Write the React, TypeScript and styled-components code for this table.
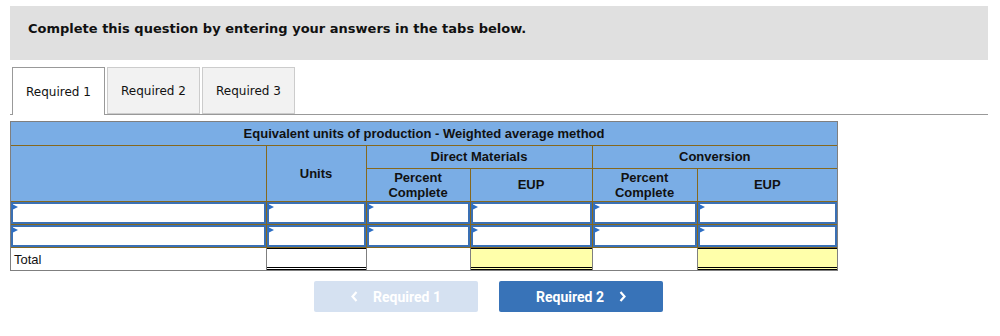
import styled, { createGlobalStyle } from 'styled-components';

const GlobalStyle = createGlobalStyle`
  body {
    margin: 0;
    background: #ffffff;
  }
`;

const blueHead = '#7aade5';
const brown = '#86681e';
const gray = '#7f7f7f';

const Page = styled.div`
  width: 1000px;
  height: 336px;
  padding: 6px 12px 0 10px;
  box-sizing: border-box;
`;

const Banner = styled.div`
  height: 54px;
  padding: 15px 18px 0;
  box-sizing: border-box;
  background: #e0e0e0;
  font-family: 'DejaVu Sans', Verdana, sans-serif;
  font-weight: bold;
  font-size: 13px;
  color: #111111;
`;

const TabBar = styled.div`
  display: flex;
  align-items: flex-end;
  gap: 2px;
  height: 48px;
  margin-top: 7px;
  padding-left: 2px;
  border-bottom: 1px solid #999999;
  box-sizing: border-box;
`;

const Tab = styled.div<{ $active?: boolean }>`
  display: flex;
  align-items: center;
  justify-content: center;
  width: 93px;
  height: ${(p) => (p.$active ? '48px' : '47px')};
  margin-bottom: ${(p) => (p.$active ? '-1px' : '0')};
  padding-top: 1px;
  box-sizing: border-box;
  border: 1px solid ${(p) => (p.$active ? '#999999' : '#cccccc')};
  border-bottom: ${(p) => (p.$active ? 'none' : '1px solid #cccccc')};
  background: ${(p) => (p.$active ? '#ffffff' : '#f2f2f2')};
  font-family: 'DejaVu Sans', Tahoma, sans-serif;
  font-size: 12px;
  color: #111111;
`;

const Frame = styled.div`
  width: 828px;
  margin-top: 6px;
  border: 1px solid ${gray};
  box-sizing: border-box;
`;

const Grid = styled.table`
  width: 826px;
  border-collapse: collapse;
  border-style: hidden;
  table-layout: fixed;
  font-family: 'Liberation Sans', Arial, sans-serif;
  font-size: 13px;
  color: #111111;
`;

const Head = styled.th`
  padding: 0;
  background: ${blueHead};
  border: 1px solid ${brown};
  font-weight: bold;
  text-align: center;
  vertical-align: middle;
  line-height: 15px;
`;

const Cell = styled.td<{ $plain?: boolean }>`
  padding: 0;
  border: 1px solid ${(p) => (p.$plain ? gray : brown)};
  vertical-align: top;
`;

const Entry = styled.div`
  position: relative;
  height: 22px;
  border: 2px solid #3a70b4;
  box-sizing: border-box;
  background: #ffffff;
`;

/* little flag in the corner of an editable cell */
const Marker = styled.span`
  position: absolute;
  left: -1px;
  top: 0;
  width: 0;
  height: 0;
  border-top: 3.5px solid transparent;
  border-bottom: 3.5px solid transparent;
  border-left: 6px solid #2d6ec4;
`;

const Sum = styled.div<{ $yellow?: boolean }>`
  height: 22px;
  box-sizing: border-box;
  border-top: 1px solid #000000;
  border-bottom: 3px double #000000;
  background: ${(p) => (p.$yellow ? '#ffffaa' : '#ffffff')};
`;

const Label = styled.div`
  height: 22px;
  padding-left: 3px;
  line-height: 23px;
  font-size: 13px;
`;

const Pager = styled.div`
  display: flex;
  gap: 21px;
  margin-top: 10px;
  padding-left: 304px;
`;

const NavButton = styled.button<{ $disabled?: boolean }>`
  display: flex;
  align-items: center;
  justify-content: center;
  gap: 15px;
  width: 164px;
  height: 31px;
  padding: 0;
  border: none;
  border-radius: 2px;
  background: ${(p) => (p.$disabled ? '#d5e1f1' : '#3873b8')};
  color: #ffffff;
  font-family: Roboto, 'Liberation Sans', sans-serif;
  font-weight: bold;
  font-size: 14px;
  cursor: ${(p) => (p.$disabled ? 'default' : 'pointer')};
`;

const Chevron = ({ dir }: { dir: 'left' | 'right' }) => (
  <svg width="7" height="11" viewBox="0 0 7 11">
    <path
      d={dir === 'left' ? 'M5.5 1 L1.5 5.5 L5.5 10' : 'M1.5 1 L5.5 5.5 L1.5 10'}
      fill="none"
      stroke="#ffffff"
      strokeWidth="2.2"
    />
  </svg>
);

const widths = [255, 100, 104, 122, 105, 140];

const InputRow = () => (
  <tr style={{ height: 23 }}>
    {widths.map((_, i) => (
      <Cell key={i}>
        <Entry>
          <Marker />
        </Entry>
      </Cell>
    ))}
  </tr>
);

export default function App() {
  return (
    <>
      <GlobalStyle />
      <Page>
        <Banner>Complete this question by entering your answers in the tabs below.</Banner>

        <TabBar>
          <Tab $active>Required 1</Tab>
          <Tab>Required 2</Tab>
          <Tab>Required 3</Tab>
        </TabBar>

        <Frame>
          <Grid>
            <colgroup>
              {widths.map((w, i) => (
                <col key={i} style={{ width: w }} />
              ))}
            </colgroup>
            <tbody>
              <tr style={{ height: 23 }}>
                <Head colSpan={6}>Equivalent units of production - Weighted average method</Head>
              </tr>
              <tr style={{ height: 23 }}>
                <Head rowSpan={2}></Head>
                <Head rowSpan={2}>Units</Head>
                <Head colSpan={2}>Direct Materials</Head>
                <Head colSpan={2}>Conversion</Head>
              </tr>
              <tr style={{ height: 33 }}>
                <Head>
                  Percent
                  <br />
                  Complete
                </Head>
                <Head>EUP</Head>
                <Head>
                  Percent
                  <br />
                  Complete
                </Head>
                <Head>EUP</Head>
              </tr>
              <InputRow />
              <InputRow />
              <tr style={{ height: 23 }}>
                <Cell $plain>
                  <Label>Total</Label>
                </Cell>
                <Cell $plain>
                  <Sum />
                </Cell>
                <Cell $plain></Cell>
                <Cell $plain>
                  <Sum $yellow />
                </Cell>
                <Cell $plain></Cell>
                <Cell $plain>
                  <Sum $yellow />
                </Cell>
              </tr>
            </tbody>
          </Grid>
        </Frame>

        <Pager>
          <NavButton $disabled>
            <Chevron dir="left" />
            Required 1
          </NavButton>
          <NavButton>
            Required 2
            <Chevron dir="right" />
          </NavButton>
        </Pager>
      </Page>
    </>
  );
}
